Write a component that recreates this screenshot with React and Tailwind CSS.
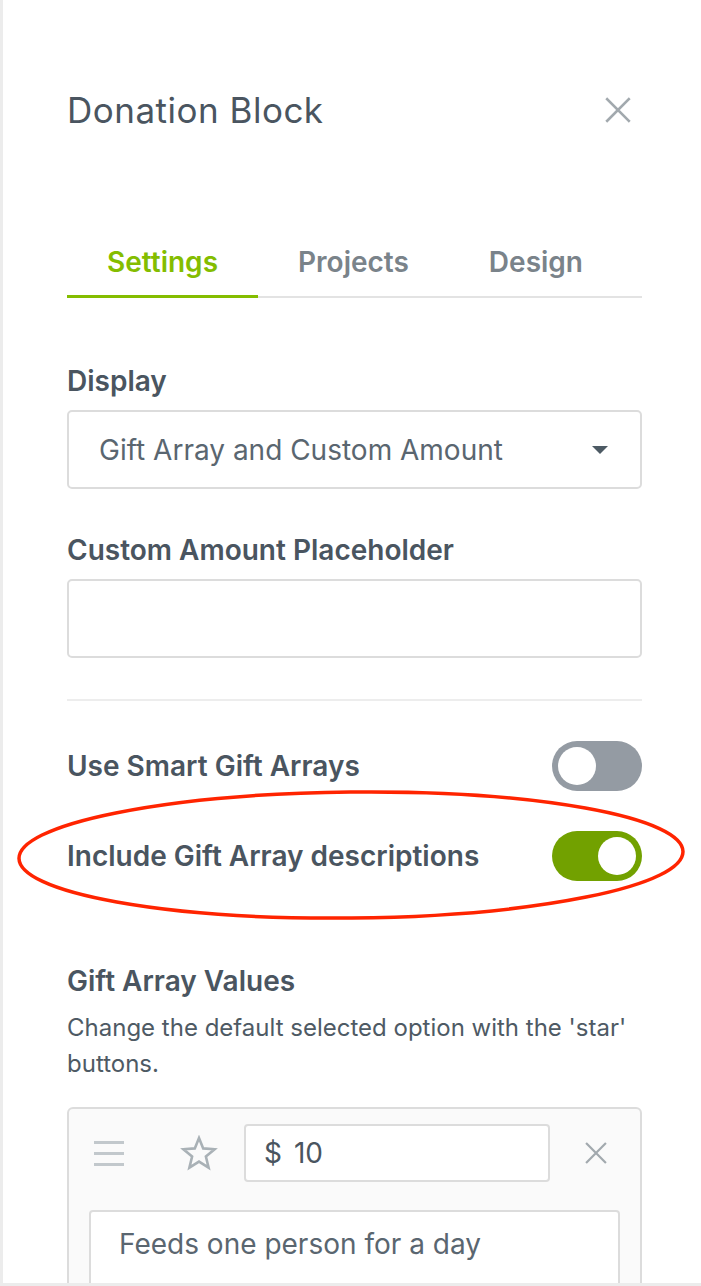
import React from 'react'

const font = { fontFamily: 'Inter, "Noto Sans", sans-serif' }

const Toggle = ({ on }) => (
  <div
    className={
      'flex h-[50px] w-[90px] shrink-0 items-center rounded-full px-[6px] ' +
      (on ? 'justify-end bg-[#72a100]' : 'justify-start bg-[#949ba3]')
    }
  >
    <div className="h-[38px] w-[38px] rounded-full bg-white" />
  </div>
)

const CloseIcon = ({ size, color, width }) => (
  <svg width={size} height={size} viewBox="0 0 24 24" fill="none" stroke={color} strokeWidth={width} strokeLinecap="square">
    <path d="M2 2 L22 22 M22 2 L2 22" />
  </svg>
)

const App = () => {
  return (
    <div
      className="relative h-[1286px] w-full overflow-hidden border-b-[3px] border-l-[3px] border-[#ececec] bg-white text-[#4a5560]"
      style={font}
    >
      <div className="flex flex-col pl-16 pr-[59px] pt-[90px]">
        {/* header */}
        <div className="flex items-center justify-between">
          <h1 className="text-[35px] font-normal leading-[40px] tracking-[0.5px] text-[#4a5560]">Donation Block</h1>
          <div className="mr-[11px]">
            <CloseIcon size={26} color="#a2a9ae" width={2.4} />
          </div>
        </div>

        {/* tabs */}
        <div className="mt-[116px] flex border-b-2 border-[#e3e3e3]">
          <div className="-mb-[2px] border-b-[3px] border-[#84bd00] px-10 pb-[17px] text-[28px] font-semibold leading-[32px] text-[#84bd00]">
            Settings
          </div>
          <div className="px-10 pb-[17px] text-[28px] font-semibold leading-[32px] text-[#7a838a]">Projects</div>
          <div className="px-10 pb-[17px] text-[28px] font-semibold leading-[32px] text-[#7a838a]">Design</div>
        </div>

        {/* display */}
        <label className="mt-[68px] text-[28px] font-semibold leading-[30px]">Display</label>
        <div className="mt-[14px] flex h-[79px] items-center justify-between rounded-[5px] border-2 border-[#dcdcdc] pl-[30px] pr-[32px]">
          <span className="text-[28px] leading-[32px] text-[#5a6670]">Gift Array and Custom Amount</span>
          <svg width="16" height="8" viewBox="0 0 16 8">
            <path d="M0 0 H16 L8 8 Z" fill="#4d5a64" />
          </svg>
        </div>

        {/* custom amount placeholder */}
        <label className="mt-[46px] text-[28px] font-semibold leading-[30px]">Custom Amount Placeholder</label>
        <div className="mt-[14px] h-[79px] rounded-[5px] border-2 border-[#dcdcdc]" />

        <div className="mt-[41px] h-[2px] bg-[#ededed]" />

        {/* toggles */}
        <div className="mt-[40px] flex items-center justify-between">
          <span className="text-[28px] font-semibold leading-[30px]">Use Smart Gift Arrays</span>
          <Toggle on={false} />
        </div>
        <div className="mt-[40px] flex items-center justify-between">
          <span className="text-[28px] font-semibold leading-[30px]">Include Gift Array descriptions</span>
          <Toggle on />
        </div>

        {/* gift array values */}
        <label className="mt-[85px] text-[28px] font-semibold leading-[30px]">Gift Array Values</label>
        <p className="mt-[14px] text-[24px] leading-[36px] text-[#4e5a64]">
          Change the default selected option with the 'star' buttons.
        </p>

        <div className="mt-[25px] rounded-t-[6px] border-2 border-[#dcdcdc] bg-[#fafafa] px-[20px] pt-[15px] pb-10">
          <div className="flex items-center">
            <div className="ml-[5px] flex w-[30px] flex-col gap-[8px]">
              <div className="h-[3px] bg-[#c2c8cc]" />
              <div className="h-[3px] bg-[#c2c8cc]" />
              <div className="h-[3px] bg-[#c2c8cc]" />
            </div>
            <svg className="ml-[56px]" width="38" height="36" viewBox="0 0 38 36" fill="none">
              <path
                d="M19 3 L23.2 13.4 L34.6 14.2 L25.9 21.5 L28.6 32.6 L19 26.6 L9.4 32.6 L12.1 21.5 L3.4 14.2 L14.8 13.4 Z"
                stroke="#a9b1b6"
                strokeWidth="2.6"
                strokeLinejoin="miter"
              />
            </svg>
            <div className="ml-[26px] flex h-[58px] w-[306px] items-center rounded-[4px] border-2 border-[#dcdcdc] bg-white pl-[18px]">
              <span className="text-[28px] leading-[32px] text-[#4a5560]">$</span>
              <span className="ml-[12px] text-[28px] leading-[32px] text-[#4a5560]">10</span>
            </div>
            <div className="ml-[35px]">
              <CloseIcon size={22} color="#a2a9ae" width={2.4} />
            </div>
          </div>
          <div className="mt-[28px] h-[120px] rounded-[4px] border-2 border-[#dcdcdc] bg-white px-[28px] pt-[16px]">
            <span className="text-[28px] leading-[32px] text-[#5a6670]">Feeds one person for a day</span>
          </div>
        </div>
      </div>

      {/* red annotation ellipse */}
      <svg className="pointer-events-none absolute left-0 top-0" width="701" height="1286" viewBox="0 0 701 1286">
        <ellipse cx="348" cy="855" rx="332" ry="63" fill="none" stroke="#ff2400" strokeWidth="3.5" transform="rotate(-0.6 348 855)" />
      </svg>
    </div>
  )
}

export default App
